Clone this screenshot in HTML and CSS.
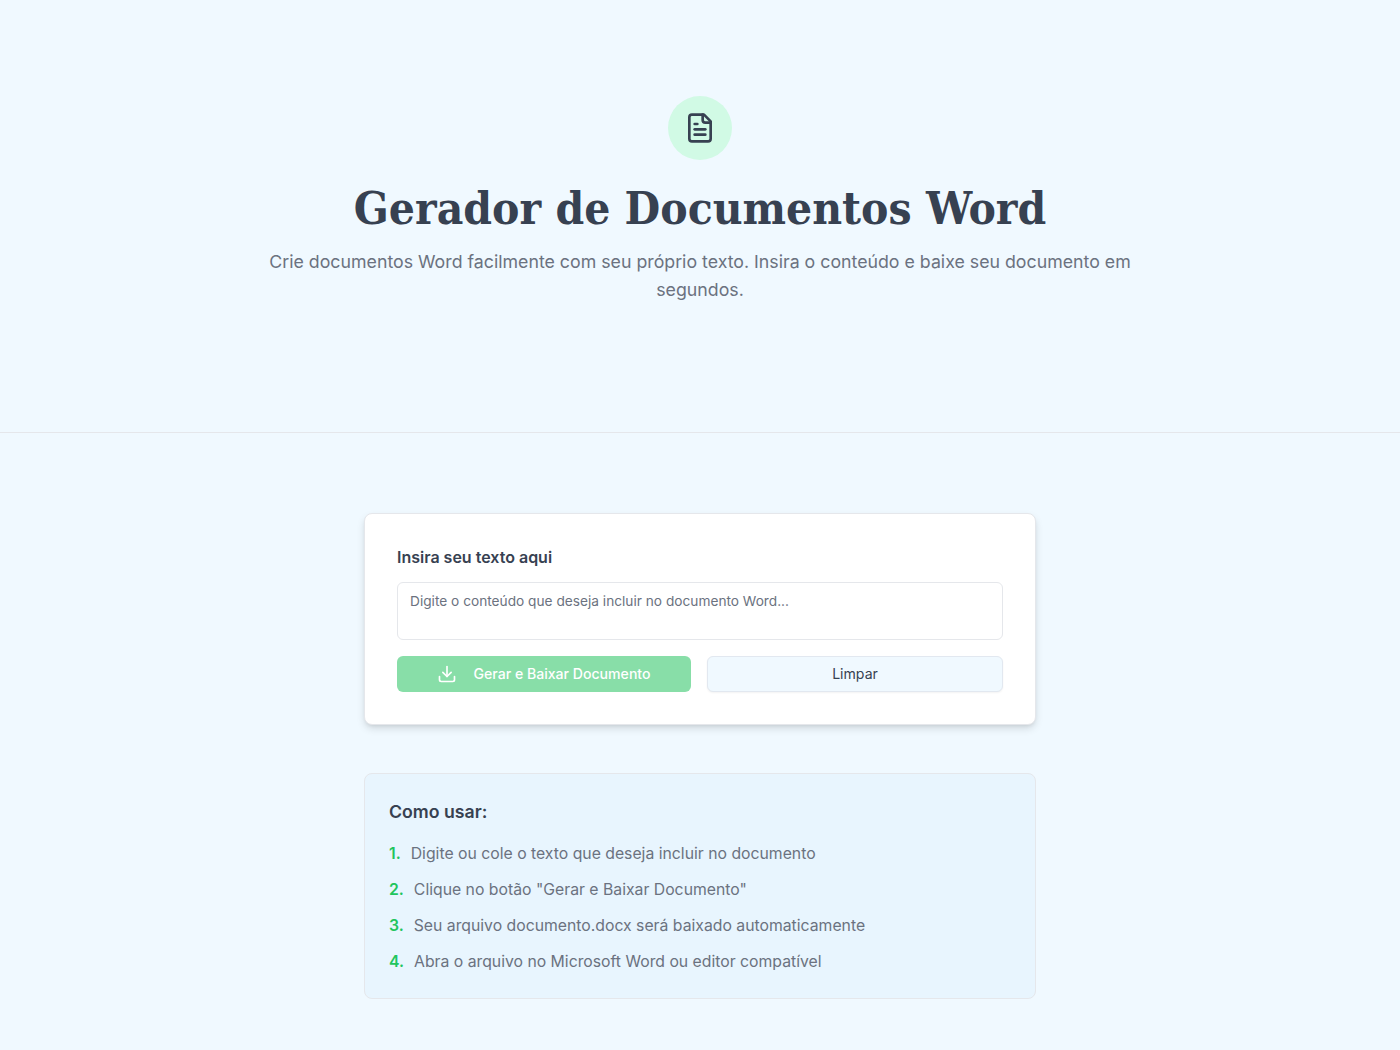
FILE: index.html
```html
<!DOCTYPE html>
<html lang="pt-BR">
<head>
    <meta charset="UTF-8">
    <title>Gerador de Documentos Word</title>
    <link rel="stylesheet" href="styles.css">
</head>
<body>
    <header class="hero">
        <div class="hero-icon">
            <svg width="32" height="32" viewBox="0 0 24 24" fill="none" stroke="#374151" stroke-width="2" stroke-linecap="round" stroke-linejoin="round">
                <path d="M15 2H6a2 2 0 0 0-2 2v16a2 2 0 0 0 2 2h12a2 2 0 0 0 2-2V7z"/>
                <path d="M14 2v4a2 2 0 0 0 2 2h4"/>
                <path d="M16 13H8"/>
                <path d="M16 17H8"/>
                <path d="M10 9H8"/>
            </svg>
        </div>
        <h1 class="hero-title">Gerador de Documentos Word</h1>
        <p class="hero-text">Crie documentos Word facilmente com seu próprio texto. Insira o conteúdo e baixe seu documento em segundos.</p>
    </header>

    <main class="content">
        <section class="card">
            <label class="field-label" for="texto">Insira seu texto aqui</label>
            <textarea class="field-input" id="texto" placeholder="Digite o conteúdo que deseja incluir no documento Word..."></textarea>
            <div class="actions">
                <button class="btn btn-primary" type="button">
                    <svg width="20" height="20" viewBox="0 0 24 24" fill="none" stroke="currentColor" stroke-width="2" stroke-linecap="round" stroke-linejoin="round">
                        <path d="M21 15v4a2 2 0 0 1-2 2H5a2 2 0 0 1-2-2v-4"/>
                        <path d="M7 10l5 5 5-5"/>
                        <path d="M12 15V3"/>
                    </svg>
                    <span>Gerar e Baixar Documento</span>
                </button>
                <button class="btn btn-light" type="button">Limpar</button>
            </div>
        </section>

        <section class="help">
            <h2 class="help-title">Como usar:</h2>
            <ol class="help-list">
                <li><b>1.</b>Digite ou cole o texto que deseja incluir no documento</li>
                <li><b>2.</b>Clique no botão "Gerar e Baixar Documento"</li>
                <li><b>3.</b>Seu arquivo documento.docx será baixado automaticamente</li>
                <li><b>4.</b>Abra o arquivo no Microsoft Word ou editor compatível</li>
            </ol>
        </section>
    </main>
</body>
</html>
```

FILE: styles.css
```css
*{
    margin: 0;
    padding: 0;
    box-sizing: border-box;
}

body{
    background: #f0f9ff;
    font-family: "Inter", "Noto Sans", sans-serif;
    color: #374151;
}

.hero{
    height: 433px;
    padding-top: 96px;
    border-bottom: 1px solid #e5e7eb;
    text-align: center;
}

.hero-icon{
    width: 64px;
    height: 64px;
    margin: 0 auto 24px;
    border-radius: 50%;
    background: #d1fae5;
    display: flex;
    align-items: center;
    justify-content: center;
}

.hero-title{
    font-family: "DejaVu Serif Condensed", "DejaVu Serif", serif;
    font-size: 45.7px;
    line-height: 48px;
    font-weight: 700;
    color: #374151;
    margin-bottom: 16px;
}

.hero-text{
    width: 896px;
    margin: 0 auto;
    font-size: 17.75px;
    line-height: 28px;
    color: #6b7280;
}

.content{
    width: 672px;
    margin: 0 auto;
    padding-top: 80px;
}

.card{
    height: 212px;
    padding: 32px;
    background: #ffffff;
    border: 1px solid #e5e7eb;
    border-radius: 8px;
    box-shadow: 0 4px 8px -1px rgba(0,0,0,0.14), 0 2px 4px -2px rgba(0,0,0,0.1);
}

.field-label{
    display: block;
    font-size: 16px;
    line-height: 22px;
    font-weight: 600;
    margin-bottom: 14px;
}

.field-input{
    display: block;
    width: 100%;
    height: 58px;
    padding: 9px 12px;
    font-family: inherit;
    font-size: 13.7px;
    line-height: 18px;
    border: 1px solid #e5e7eb;
    border-radius: 6px;
    background: #ffffff;
    resize: none;
}

.field-input::placeholder{
    color: #6b7280;
    opacity: 1;
}

.actions{
    display: flex;
    gap: 16px;
    margin-top: 16px;
}

.btn{
    flex: 1;
    height: 36px;
    padding-bottom: 1px;
    border-radius: 6px;
    font-family: inherit;
    font-size: 14.1px;
    font-weight: 500;
    display: flex;
    align-items: center;
    justify-content: center;
}

.btn-primary{
    gap: 16px;
    border: none;
    background: #88dea8;
    color: #ffffff;
}

.btn-light{
    border: 1px solid #e2e8f0;
    background: #f0f9ff;
    color: #374151;
    font-weight: 400;
    box-shadow: 0 1px 2px rgba(0,0,0,0.05);
}

.help{
    height: 226px;
    margin-top: 48px;
    padding: 24px;
    background: #e8f5fe;
    border: 1px solid #e5e7eb;
    border-radius: 8px;
}

.help-title{
    font-size: 17.7px;
    line-height: 28px;
    font-weight: 600;
    margin-bottom: 16px;
}

.help-list{
    list-style-type: none;
    font-size: 15.77px;
    line-height: 24px;
    color: #6b7280;
}

.help-list li{
    margin-bottom: 12px;
}

.help-list b{
    color: #22c55e;
    font-weight: 600;
    margin-right: 10px;
}
```
